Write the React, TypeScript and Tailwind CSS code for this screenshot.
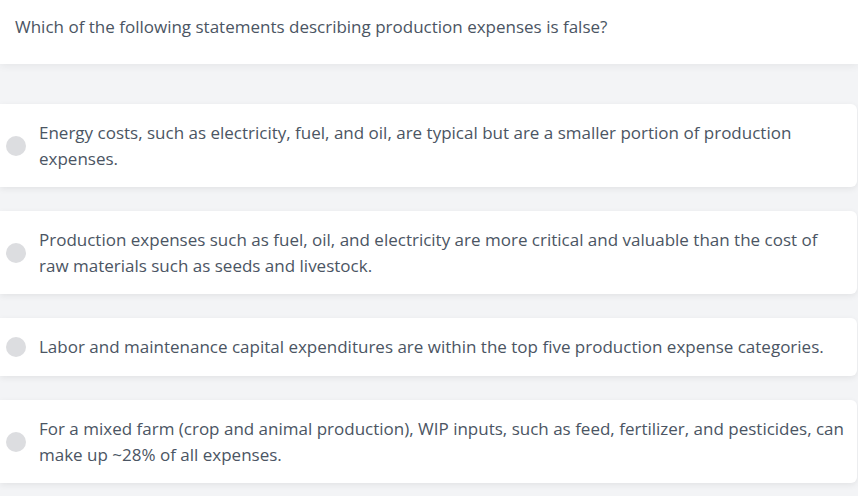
import React from "react";

const options = [
  "Energy costs, such as electricity, fuel, and oil, are typical but are a smaller portion of production expenses.",
  "Production expenses such as fuel, oil, and electricity are more critical and valuable than the cost of raw materials such as seeds and livestock.",
  "Labor and maintenance capital expenditures are within the top five production expense categories.",
  "For a mixed farm (crop and animal production), WIP inputs, such as feed, fertilizer, and pesticides, can make up ~28% of all expenses.",
];

export default function App() {
  return (
    <div
      className="min-h-[496px] w-[858px] bg-[#f3f4f6] text-[#4b5563]"
      style={{ fontFamily: '"Open Sans", "Noto Sans", sans-serif' }}
    >
      <div className="relative z-10 h-16 bg-white pl-[15px] pt-[14px] text-[17px] leading-[26px] shadow-[0_2px_8px_rgba(0,0,0,0.06)]">
        Which of the following statements describing production expenses is false?
      </div>
      <div className="flex flex-col gap-6 pt-10 pb-3">
        {options.map((t, i) => (
          <div
            key={i}
            className="flex w-[857px] items-center rounded-r-md bg-white py-4 pr-3 shadow-[0_2px_6px_rgba(0,0,0,0.07)]"
          >
            <div className="flex w-[39px] shrink-0 justify-center pr-[7px]">
              <span className="block h-5 w-5 rounded-full bg-[#dcdde0]" />
            </div>
            <p className="text-[17px] leading-[25.6px]">{t}</p>
          </div>
        ))}
      </div>
    </div>
  );
}
